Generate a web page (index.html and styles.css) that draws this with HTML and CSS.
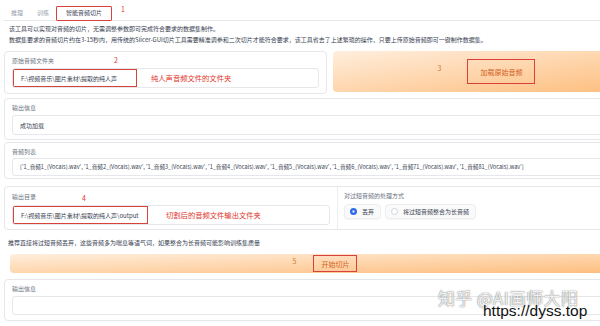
FILE: index.html
```html
<!DOCTYPE html>
<html lang="zh">
<head>
<meta charset="utf-8">
<link rel="stylesheet" href="styles.css">
</head>
<body>
<div class="page">
  <div class="tabs">
    <span class="tab">推理</span>
    <span class="tab">训练</span>
    <span class="tab sel">智能音频切片</span>
    <span class="note num n1">1</span>
  </div>

  <p class="desc">该工具可以实现对音频的切片，无需调整参数即可完成符合要求的数据集制作。<br>数据集要求的音频切片约在3-15秒内，用传统的Slicer-GUI切片工具需要精准调参和二次切片才能符合要求，该工具省去了上述繁琐的操作，只要上传原始音频即可一键制作数据集。</p>

  <div class="row row1">
    <div class="panel p-src">
      <div class="label">原始音频文件夹<span class="note num n2">2</span></div>
      <div class="input">
        <span class="redbox rb1">F:\视频音乐\图片素材\提取的纯人声</span>
        <span class="note txt t2">纯人声音频文件的文件夹</span>
      </div>
    </div>
    <div class="btn b-load">
      <span class="note num n3">3</span>
      <span class="redbox btxt">加载原始音频</span>
    </div>
  </div>

  <div class="panel p-out1">
    <div class="label">输出信息</div>
    <div class="input"><span class="val">成功加载</span></div>
  </div>

  <div class="panel p-list">
    <div class="label">音频列表</div>
    <div class="input"><span class="val">['1_音频1_(Vocals).wav', '1_音频2_(Vocals).wav', '1_音频3_(Vocals).wav', '1_音频4_(Vocals).wav', '1_音频5_(Vocals).wav', '1_音频6_(Vocals).wav', '1_音频71_(Vocals).wav', '1_音频81_(Vocals).wav']</span></div>
  </div>

  <div class="panel p-dir">
    <div class="sec sec-l">
      <div class="label">输出目录<span class="note num n4">4</span></div>
      <div class="input">
        <span class="redbox rb4">F:\视频音乐\图片素材\提取的纯人声\output</span>
        <span class="note txt t4">切割后的音频文件输出文件夹</span>
      </div>
    </div>
    <div class="sec sec-r">
      <div class="label">对过短音频的处理方式</div>
      <div class="radios">
        <span class="pill"><span class="radio on"></span>丢弃</span>
        <span class="pill"><span class="radio"></span>将过短音频整合为长音频</span>
      </div>
    </div>
  </div>

  <p class="tip">推荐直接将过短音频丢弃，这些音频多为喘息等语气词，如果整合为长音频可能影响训练集质量</p>

  <div class="btn b-start">
    <span class="note num n5">5</span>
    <span class="redbox btxt">开始切片</span>
  </div>

  <div class="panel p-out2">
    <div class="label">输出信息</div>
    <div class="input"></div>
  </div>
</div>

<div class="wm">
  <div class="wm1">知乎 @AI画师大阳</div>
  <div class="wm2">https://dyss.top</div>
</div>
</body>
</html>
```

FILE: styles.css
```css
html, body {
  margin: 0;
  padding: 0;
  background: #ffffff;
  overflow: hidden;
  width: 600px;
  height: 326px;
}
body {
  font-family: "Noto Sans CJK SC", "Noto Sans", sans-serif;
  color: #374151;
  position: relative;
}
.page {
  width: 636px;
  padding-left: 4px;
}

/* tabs */
.tabs {
  display: flex;
  align-items: flex-end;
  height: 20px;
  border-bottom: 1px solid #e5e7eb;
}
.tab {
  font-size: 6px;
  line-height: 14px;
  padding: 0 7px;
  color: #9ca3af;
}
.tab.sel {
  color: #374151;
  padding: 0 9px;
  height: 15px;
  border: 1.5px solid #d9423a;
  border-bottom-width: 1.5px;
  box-sizing: border-box;
  line-height: 12px;
  border-radius: 1px;
  margin-bottom: -1px;
  background: #fff;
}
.note { color: #e0352b; }
.num { font-size: 7px; line-height: 8px; }
.n1 { align-self: flex-start; margin-top: 5px; margin-left: 9px; }

.desc {
  margin: 2px 0 0 5px;
  font-size: 6px;
  line-height: 11px;
  color: #374151;
}

/* panels */
.panel {
  border: 1px solid #e5e7eb;
  border-radius: 4px;
  padding: 5px 7px 6px;
  background: #fff;
  box-sizing: border-box;
}
.label {
  font-size: 6px;
  line-height: 8px;
  color: #6b7280;
  margin-bottom: 3px;
  display: flex;
  align-items: center;
}
.input {
  height: 20px;
  border: 1px solid #e5e7eb;
  border-radius: 3px;
  box-sizing: border-box;
  display: flex;
  align-items: center;
  font-size: 6px;
  color: #374151;
  white-space: nowrap;
  overflow: hidden;
}
.val { padding-left: 7px; }

.redbox {
  border: 1.5px solid #d9423a;
  box-sizing: border-box;
  display: flex;
  align-items: center;
}
.input .redbox {
  height: 18px;
  padding-left: 7px;
}
.rb1 { width: 124px; }
.rb4 { width: 135px; }
.txt { font-size: 7.3px; }
.t2 { margin-left: 14px; }
.t4 { margin-left: 18px; }
.n2 { margin-left: 60px; margin-top: -3px; }
.n4 { margin-left: 46px; margin-top: 2px; }

/* row 1 */
.row { display: flex; }
.row1 { margin-top: 6px; gap: 6px; }
.p-src { width: 323px; flex: none; height: 43px; }
.btn {
  background: linear-gradient(to bottom right, #ffeedd, #fdbd7c);
  border-radius: 4px;
  display: flex;
  align-items: center;
  justify-content: center;
  color: #d2611f;
}
.b-load { flex: 1; height: 41px; }
.btxt {
  font-size: 7px;
  padding: 0 12px;
  height: 25px;
  margin-left: 26px;
}
.n3 { color: #d27a3a; font-size: 7px; margin-top: -8px; }

.p-out1 { margin-top: 4px; height: 42px; }
.p-list { margin-top: 2px; height: 37px; }
.p-list .label { margin-bottom: 2px; }
.p-list .input { height: 18px; font-size: 5.6px; }

/* output dir row */
.p-dir {
  margin-top: 7px;
  height: 44px;
  display: flex;
  padding: 0;
}
.sec { padding: 5px 7px 6px; box-sizing: border-box; }
.sec-l { width: 332px; flex: none; }
.sec-r { flex: 1; border-left: 1px solid #eceef1; padding-left: 6px; }
.radios { display: flex; gap: 4px; padding-top: 1px; }
.pill {
  display: flex;
  align-items: center;
  height: 15px;
  padding: 0 6px 0 5px;
  border: 1px solid #eceef1;
  border-radius: 4px;
  background: #fafafa;
  font-size: 6px;
  color: #374151;
  box-sizing: border-box;
  box-shadow: 0 1px 1px rgba(0,0,0,0.04);
}
.radio {
  width: 7px;
  height: 7px;
  border-radius: 50%;
  border: 1px solid #d1d5db;
  box-sizing: border-box;
  margin-right: 5px;
  background: #fff;
}
.radio.on {
  border: 2px solid #2f6be8;
  background: #fff;
  box-shadow: inset 0 0 0 0.5px #2f6be8;
}

.tip {
  margin: 8px 0 0 4px;
  font-size: 6px;
  line-height: 10px;
  color: #374151;
}

.b-start {
  margin: 6px 0 0 6px;
  height: 19px;
}
.b-start .btxt { height: 17px; padding: 0 7px; margin-left: 17px; }
.n5 { color: #d27a3a; font-size: 7px; margin-top: -5px; }

.p-out2 { margin-top: 6px; height: 42px; }
.p-out2 .input { height: 19px; }

/* watermark overlay */
.wm {
  position: absolute;
  left: 438px;
  top: 288px;
}
.wm1 {
  font-size: 17px;
  line-height: 20px;
  color: rgba(255,255,255,0.92);
  text-shadow: 0 0 1px rgba(0,0,0,0.55), 0 0 2px rgba(0,0,0,0.25);
  white-space: nowrap;
  letter-spacing: 0.3px;
}
.wm2 {
  position: absolute;
  left: 45px;
  top: 14px;
  font-family: "Liberation Sans", Arial, sans-serif;
  font-size: 15.5px;
  line-height: 18px;
  color: #111;
  white-space: nowrap;
}
```
